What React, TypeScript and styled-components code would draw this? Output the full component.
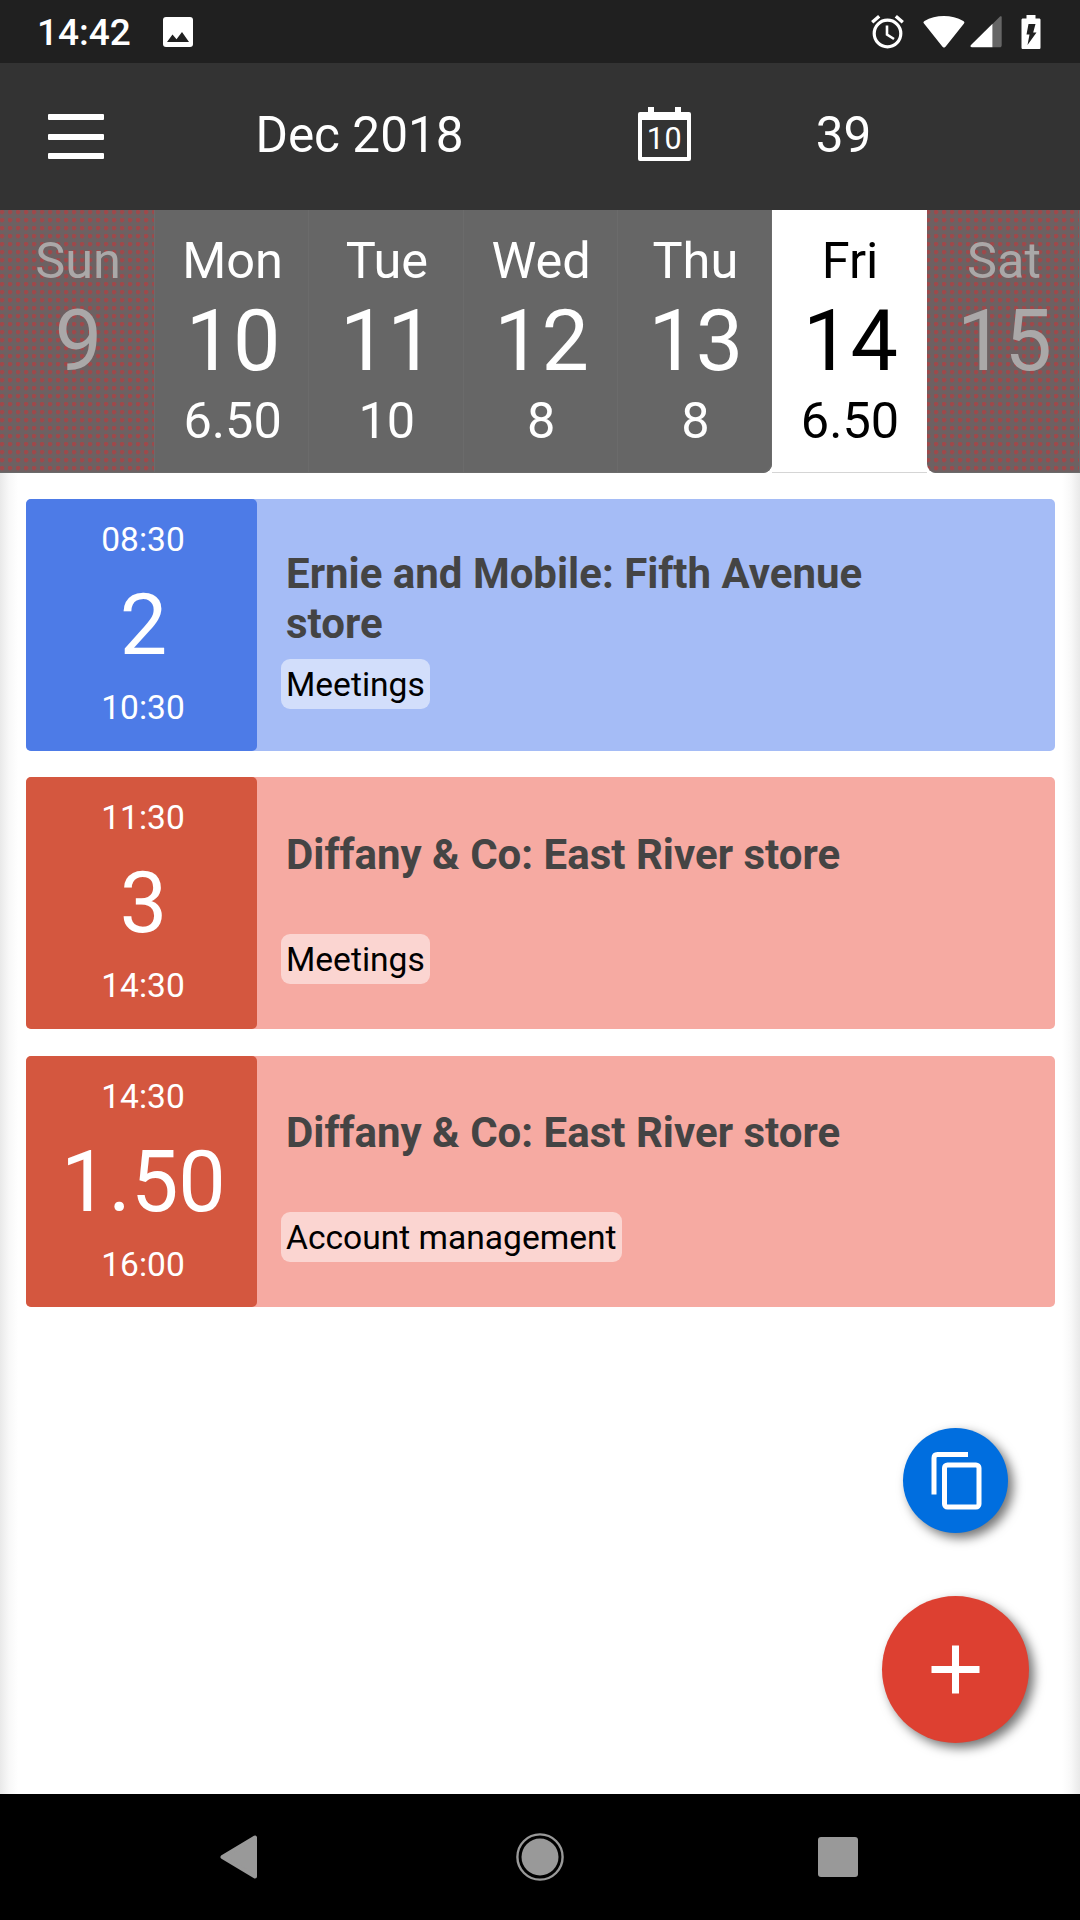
import React from 'react';
import styled, { createGlobalStyle } from 'styled-components';

const GlobalStyle = createGlobalStyle`
  * { box-sizing: border-box; }
  html, body { margin: 0; padding: 0; }
  body { font-family: Roboto, "Noto Sans", sans-serif; background: #fff; color: #000; }
  svg { display: block; flex: none; }
`;

const Screen = styled.div`
  width: 1080px;
  height: 1920px;
  display: flex;
  flex-direction: column;
  overflow: hidden;
  background: #fff;
`;

const StatusBar = styled.header`
  height: 63px;
  flex: none;
  display: flex;
  align-items: center;
  padding: 0 39px 0 37px;
  background: #202020;
  color: #fff;
`;

const Clock = styled.time`
  font-size: 37px;
  font-weight: 500;
  line-height: 66px;
  padding-top: 3px;
  width: 121px;
`;

const StatusIcons = styled.div`
  margin-left: auto;
  display: flex;
  align-items: center;
`;

const StatusIcon = styled.svg<{ $gap?: number }>`
  margin-left: ${(p) => p.$gap ?? 0}px;
`;

const Toolbar = styled.nav`
  height: 147px;
  flex: none;
  display: grid;
  grid-template-columns: 205px 309px 248px 163px 155px;
  align-items: center;
  background: #333;
  color: #fff;
`;

const MenuButton = styled.button`
  border: 0;
  padding: 0;
  margin-left: 48px;
  width: 56px;
  height: 45px;
  background: none;
  display: flex;
  flex-direction: column;
  justify-content: space-between;
`;

const MenuBar = styled.span`
  height: 6px;
  border-radius: 1px;
  background: #fff;
`;

const ToolbarText = styled.div`
  font-size: 49.5px;
  line-height: 60px;
  text-align: center;
  margin-top: -3px;
  white-space: nowrap;
`;

const CalendarSlot = styled.div`
  display: flex;
  padding-left: 124px;
`;

const CalendarIcon = styled.div`
  width: 53px;
  height: 49px;
  border: solid #fff;
  border-width: 8px 4px 4px;
  border-radius: 2px;
  position: relative;
  font-size: 30.5px;
  line-height: 37px;
  letter-spacing: 0.5px;
  text-align: center;

  &::before,
  &::after {
    content: '';
    position: absolute;
    top: -13px;
    width: 6px;
    height: 6px;
    background: #fff;
  }
  &::before { left: 6px; }
  &::after { right: 6px; }
`;

const Week = styled.section`
  height: 263px;
  flex: none;
  display: grid;
  grid-template-columns: 155px repeat(4, 1fr) 155px 153px;
`;

type DayKind = 'work' | 'weekend' | 'selected';

const dayBackground: Record<DayKind, string> = {
  work: '#666',
  weekend: 'radial-gradient(circle at 2px 2px, #a0484a 1.5px, #6d6162 3px) 0 0 / 8px 8px',
  selected: '#fff',
};
const dayColor: Record<DayKind, string> = { work: '#fff', weekend: '#aaa8a8', selected: '#000' };

const Day = styled.div<{ $kind: DayKind; $corner?: string }>`
  display: flex;
  flex-direction: column;
  align-items: center;
  padding: 20px 0 0 1px;
  background: ${(p) => dayBackground[p.$kind]};
  color: ${(p) => dayColor[p.$kind]};
  border-radius: ${(p) => p.$corner ?? '0'};
  box-shadow: inset ${(p) => (p.$kind === 'selected' ? '0 -1px #d5d5d5' : '-1px -1px #6b6b6b')};

  &:last-child { background-position: -1px 0; }
`;

const DayName = styled.span`
  font-size: 50.5px;
  line-height: 61px;
`;

const DayNumber = styled.span`
  padding-left: 1px;
  font-size: 84.5px;
  line-height: 101px;
  margin-bottom: -1px;
`;

const DayHours = styled.span`
  font-size: 50.5px;
  line-height: 59px;
`;

const Content = styled.main`
  flex: 1;
  position: relative;
  display: flex;
  flex-direction: column;
  gap: 26.7px;
  padding: 26px 25px 0 26px;
  background:
    linear-gradient(to right, #e9e9e9, #f8f8f8 9px, transparent 18px),
    linear-gradient(to left, #e9e9e9, #f8f8f8 9px, transparent 18px),
    #fff;
`;

const Card = styled.article<{ $tint: string }>`
  height: 251.6px;
  display: flex;
  border-radius: 5px;
  background: ${(p) => p.$tint};
`;

const TimePanel = styled.div<{ $color: string }>`
  width: 231px;
  border-radius: 5px;
  padding: 16px 0 0 3px;
  display: flex;
  flex-direction: column;
  align-items: center;
  background: ${(p) => p.$color};
  color: #fff;
`;

const TimeText = styled.time`
  font-size: 33.5px;
  line-height: 50px;
`;

const Duration = styled.span`
  padding-left: 1px;
  font-size: 84.5px;
  line-height: 121px;
  margin-bottom: -3px;
`;

const Details = styled.div`
  flex: 1;
  display: flex;
  flex-direction: column;
  justify-content: center;
  align-items: flex-start;
  gap: 10px;
  padding: 8px 100px 0 24px;
`;

const Title = styled.h2`
  margin: 0;
  min-height: 94px;
  padding-left: 5px;
  font-size: 42px;
  font-weight: 700;
  line-height: 50px;
  color: #444;
`;

const Tag = styled.span`
  height: 50px;
  padding: 0 5px;
  border-radius: 9px;
  background: rgba(255, 255, 255, 0.5);
  font-size: 33.6px;
  line-height: 52px;
`;

const FabColumn = styled.div`
  position: absolute;
  right: 51px;
  bottom: 51px;
  display: flex;
  flex-direction: column;
  align-items: center;
  gap: 63px;
`;

const Fab = styled.button<{ $size: number; $color: string }>`
  width: ${(p) => p.$size}px;
  height: ${(p) => p.$size}px;
  padding: 0;
  border: 0;
  border-radius: 50%;
  display: flex;
  align-items: center;
  justify-content: center;
  background: ${(p) => p.$color};
  box-shadow: 5px 5px 11px rgba(0, 0, 0, 0.55);
`;

const NavBar = styled.footer`
  height: 126px;
  flex: none;
  display: flex;
  align-items: center;
  padding-left: 220px;
  background: #000;
`;

const NavIcon = styled.svg<{ $gap?: number }>`
  margin-left: ${(p) => p.$gap ?? 0}px;
`;

interface DayData {
  name: string;
  number: number;
  hours?: string;
  kind: DayKind;
  corner?: string;
}

const days: DayData[] = [
  { name: 'Sun', number: 9, kind: 'weekend' },
  { name: 'Mon', number: 10, hours: '6.50', kind: 'work' },
  { name: 'Tue', number: 11, hours: '10', kind: 'work' },
  { name: 'Wed', number: 12, hours: '8', kind: 'work' },
  { name: 'Thu', number: 13, hours: '8', kind: 'work', corner: '0 0 9px 0' },
  { name: 'Fri', number: 14, hours: '6.50', kind: 'selected' },
  { name: 'Sat', number: 15, kind: 'weekend', corner: '0 0 0 9px' },
];

const blue = { color: '#4d7be7', tint: '#a5bcf6' };
const red = { color: '#d4573f', tint: '#f6aaa2' };

const entries = [
  { start: '08:30', hours: '2', end: '10:30', title: 'Ernie and Mobile: Fifth Avenue store', tag: 'Meetings', ...blue },
  { start: '11:30', hours: '3', end: '14:30', title: 'Diffany & Co: East River store', tag: 'Meetings', ...red },
  { start: '14:30', hours: '1.50', end: '16:00', title: 'Diffany & Co: East River store', tag: 'Account management', ...red },
];

export default function App() {
  return (
    <>
      <GlobalStyle />
      <Screen>
        <StatusBar>
          <Clock>14:42</Clock>
          <StatusIcon $gap={4} width="32" height="32" viewBox="0 0 32 32">
            <rect x="1" y="1" width="30" height="30" rx="3" fill="#fff" />
            <path d="M5 26l5.5-7.5 4 4.8 5.5-7.3L27 26z" fill="#202020" />
          </StatusIcon>
          <StatusIcons>
            <StatusIcon width="33" height="35" viewBox="0 0 33 35" fill="none" stroke="#fff">
              <circle cx="16.5" cy="19.5" r="13.3" strokeWidth="3.2" />
              <path d="M16 11.5v9l7 4.5" strokeWidth="2.6" />
              <path d="M1.2 8.3l7-6M31.8 8.3l-7-6" strokeWidth="3.4" />
            </StatusIcon>
            <StatusIcon $gap={19} width="42" height="34" viewBox="0 0 42 34">
              <path d="M1.2 8.7C0 7.7.3 6.8 1.5 6 12.5-.8 29-.8 40.3 6c1.2.8 1.5 1.7.5 2.7L22.5 31.8c-1 1.1-2 1.1-3 0z" fill="#fff" />
            </StatusIcon>
            <StatusIcon $gap={5} width="32" height="32" viewBox="0 0 32 32">
              <path d="M22.5 8L30 .6c1-.8 1.7-.3 1.7.8V29c0 1.5-.7 2.3-2 2.3h-7.2z" fill="#666" />
              <path d="M22.5 7.8v23.5H2c-1.7 0-2-1.3-1-2.3z" fill="#fff" />
            </StatusIcon>
            <StatusIcon $gap={19} width="20" height="36" viewBox="0 0 20 36">
              <path d="M5.5 1h9v3.5H18c1 0 1.5.5 1.5 1.5v27.5c0 1-.5 1.5-1.5 1.5H2c-1 0-1.5-.5-1.5-1.5V6c0-1 .5-1.5 1.5-1.5h3.5z" fill="#fff" />
              <path d="M7.5 10h7l-2.3 8.5h3.3L6.5 31l2-10.5H5.5z" fill="#202020" />
            </StatusIcon>
          </StatusIcons>
        </StatusBar>

        <Toolbar>
          <MenuButton aria-label="Menu">
            <MenuBar />
            <MenuBar />
            <MenuBar />
          </MenuButton>
          <ToolbarText>Dec 2018</ToolbarText>
          <CalendarSlot>
            <CalendarIcon>10</CalendarIcon>
          </CalendarSlot>
          <ToolbarText>39</ToolbarText>
        </Toolbar>

        <Week>
          {days.map((d) => (
            <Day key={d.name} $kind={d.kind} $corner={d.corner}>
              <DayName>{d.name}</DayName>
              <DayNumber>{d.number}</DayNumber>
              {d.hours && <DayHours>{d.hours}</DayHours>}
            </Day>
          ))}
        </Week>

        <Content>
          {entries.map((e) => (
            <Card key={e.start} $tint={e.tint}>
              <TimePanel $color={e.color}>
                <TimeText>{e.start}</TimeText>
                <Duration>{e.hours}</Duration>
                <TimeText>{e.end}</TimeText>
              </TimePanel>
              <Details>
                <Title>{e.title}</Title>
                <Tag>{e.tag}</Tag>
              </Details>
            </Card>
          ))}
          <FabColumn>
            <Fab $size={105} $color="#006edf" aria-label="Copy">
              <svg width="52" height="60" viewBox="0 0 52 60" fill="none" stroke="#fff" strokeWidth="5">
                <path d="M38 3.5H7.5Q4 3.5 4 7V43.5" />
                <rect x="14.5" y="14" width="34.5" height="42" rx="3" />
              </svg>
            </Fab>
            <Fab $size={147} $color="#dd4031" aria-label="Add">
              <svg width="49" height="49" viewBox="0 0 49 49">
                <path d="M0.5 24.5h48M24.5 0.5v48" stroke="#fff" strokeWidth="7" />
              </svg>
            </Fab>
          </FabColumn>
        </Content>

        <NavBar>
          <NavIcon width="38" height="44" viewBox="0 0 38 44">
            <path d="M35 2.5v39L2.5 22z" fill="#999" stroke="#999" strokeWidth="4" strokeLinejoin="round" />
          </NavIcon>
          <NavIcon $gap={257.5} width="48" height="48" viewBox="0 0 48 48">
            <circle cx="24" cy="24" r="22.6" fill="none" stroke="#999" strokeWidth="2.4" />
            <circle cx="24" cy="24" r="18.5" fill="#999" />
          </NavIcon>
          <NavIcon $gap={254.5} width="40" height="40" viewBox="0 0 40 40">
            <rect width="40" height="40" rx="3" fill="#999" />
          </NavIcon>
        </NavBar>
      </Screen>
    </>
  );
}
